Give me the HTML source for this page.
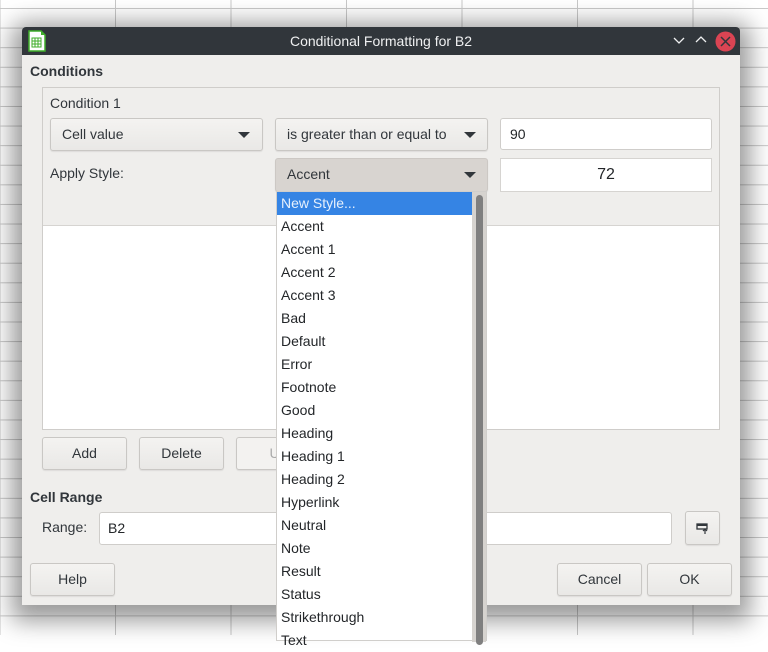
<!DOCTYPE html>
<html><head><meta charset="utf-8"><style>
*{box-sizing:border-box;margin:0;padding:0}
body{width:768px;height:635px;overflow:hidden;position:relative;background:#fff;font-family:"Liberation Sans","DejaVu Sans",sans-serif;font-size:14px;color:#31363b}
.grid{position:absolute;inset:0;background-image:linear-gradient(#c8c8c8 1px,transparent 1px),linear-gradient(90deg,#c8c8c8 1px,transparent 1px);background-size:100% 19.6px,115.5px 100%;background-position:0 8px,115px 0}
.dlg{position:absolute;left:22px;top:27px;width:718px;height:578px;background:#efeeec;border-radius:4px 4px 0 0;box-shadow:0 6px 24px 10px rgba(0,0,0,.4)}
.title{height:28px;background:#31363b;border-radius:4px 4px 0 0;color:#eff0f1;text-align:center;line-height:28px;font-size:14px;position:relative}
.abs{position:absolute}
.btn{position:absolute;background:linear-gradient(#f4f3f1,#e9e8e6);border:1px solid #c9c7c4;border-radius:3px;text-align:center;color:#31363b;box-shadow:0 1px 1px rgba(0,0,0,.08)}
.inp{position:absolute;background:#fff;border:1px solid #cfcdca;border-radius:3px}
.arrow{position:absolute;right:12px;top:13px;width:0;height:0;border-left:6px solid transparent;border-right:6px solid transparent;border-top:6px solid #31363b}
.list{position:absolute;left:276px;top:191px;width:211px;height:450px;background:#fff;border:1px solid #d0cecb}
.list div{height:23px;line-height:23px;padding-left:4px;color:#232629}
.list .sel{background:#3584e4;color:#e6f0fc}
</style></head><body>
<div class="grid"></div>
<div class="dlg">
 <div class="title">Conditional Formatting for B2
  <svg class="abs" style="left:6px;top:3px" width="18" height="22" viewBox="0 0 18 22"><path d="M1 1h12l4 4v16H1z" fill="#fff" stroke="#3fae2a" stroke-width="1.5"/><path d="M13 1v4h4z" fill="#3fae2a"/><rect x="4" y="8" width="9" height="9" fill="none" stroke="#3fae2a"/><path d="M4 11h9M4 14h9M7 8v9M10 8v9" stroke="#3fae2a"/></svg>
  <svg class="abs" style="left:651px;top:9px" width="12" height="10"><path d="M1 2l5 5 5-5" stroke="#eff0f1" stroke-width="1.3" fill="none"/></svg>
  <svg class="abs" style="left:673px;top:8px" width="12" height="10"><path d="M1 7l5-5 5 5" stroke="#eff0f1" stroke-width="1.3" fill="none"/></svg>
  <svg class="abs" style="left:693px;top:4px" width="21" height="21"><circle cx="10.5" cy="10.5" r="10" fill="#da4453"/><path d="M6 6l9 9M15 6l-9 9" stroke="#31363b" stroke-width="1.5"/></svg>
 </div>
 <div class="abs" style="left:8px;top:36px;font-weight:bold">Conditions</div>
 <div class="abs" style="left:20px;top:60px;width:678px;height:343px;background:#fff;border:1px solid #cfcdca"></div>
 <div class="abs" style="left:21px;top:61px;width:676px;height:138px;background:#efeeec;border-bottom:1px solid #d6d4d1"></div>
 <div class="abs" style="left:28px;top:68px">Condition 1</div>
 <div class="btn" style="left:28px;top:91px;width:213px;height:33px;line-height:31px;text-align:left;padding-left:11px">Cell value<span class="arrow"></span></div>
 <div class="btn" style="left:253px;top:91px;width:213px;height:33px;line-height:31px;text-align:left;padding-left:11px">is greater than or equal to<span class="arrow" style="right:11px"></span></div>
 <div class="inp" style="left:478px;top:91px;width:212px;height:32px;line-height:30px;padding-left:9px;color:#232629">90</div>
 <div class="abs" style="left:28px;top:138px">Apply Style:</div>
 <div class="btn" style="left:253px;top:131px;width:213px;height:34px;line-height:30px;text-align:left;padding-left:11px;background:#d8d4d0;border-color:#ccc8c4">Accent<span class="arrow" style="right:11px"></span></div>
 <div class="abs" style="left:478px;top:131px;width:212px;height:34px;line-height:32px;text-align:center;background:#fff;border:1px solid #d6d4d1;font-size:16px;color:#232629">72</div>
 <div class="btn" style="left:20px;top:410px;width:85px;height:33px;line-height:31px">Add</div>
 <div class="btn" style="left:117px;top:410px;width:85px;height:33px;line-height:31px">Delete</div>
 <div class="btn" style="left:214px;top:410px;width:85px;height:33px;line-height:31px;color:#aaa;background:#f3f2f0">Up</div>
 <div class="abs" style="left:8px;top:462px;font-weight:bold">Cell Range</div>
 <div class="abs" style="left:20px;top:492px">Range:</div>
 <div class="inp" style="left:77px;top:485px;width:573px;height:33px;line-height:31px;padding-left:8px;color:#232629">B2</div>
 <div class="btn" style="left:663px;top:484px;width:35px;height:34px"><svg style="position:absolute;left:10px;top:11px" width="14" height="12"><rect x="1" y="1" width="10" height="5" fill="none" stroke="#31363b" stroke-width="1.3"/><rect x="1" y="1" width="10" height="2" fill="#31363b"/><path d="M9 11V6M7 8l2-2 2 2" stroke="#31363b" stroke-width="1.2" fill="none"/></svg></div>
 <div class="btn" style="left:8px;top:536px;width:85px;height:33px;line-height:31px">Help</div>
 <div class="btn" style="left:535px;top:536px;width:85px;height:33px;line-height:31px">Cancel</div>
 <div class="btn" style="left:625px;top:536px;width:85px;height:33px;line-height:31px">OK</div>
</div>
<div class="list">
 <div class="sel">New Style...</div><div>Accent</div><div>Accent 1</div><div>Accent 2</div><div>Accent 3</div><div>Bad</div><div>Default</div><div>Error</div><div>Footnote</div><div>Good</div><div>Heading</div><div>Heading 1</div><div>Heading 2</div><div>Hyperlink</div><div>Neutral</div><div>Note</div><div>Result</div><div>Status</div><div>Strikethrough</div><div>Text</div>
</div>
<div class="abs" style="left:472px;top:192px;width:14px;height:450px;background:#d6d3cf"></div>
<div class="abs" style="left:476px;top:195px;width:7px;height:450px;background:#7f7f7f;border-radius:4px"></div>
</body></html>
